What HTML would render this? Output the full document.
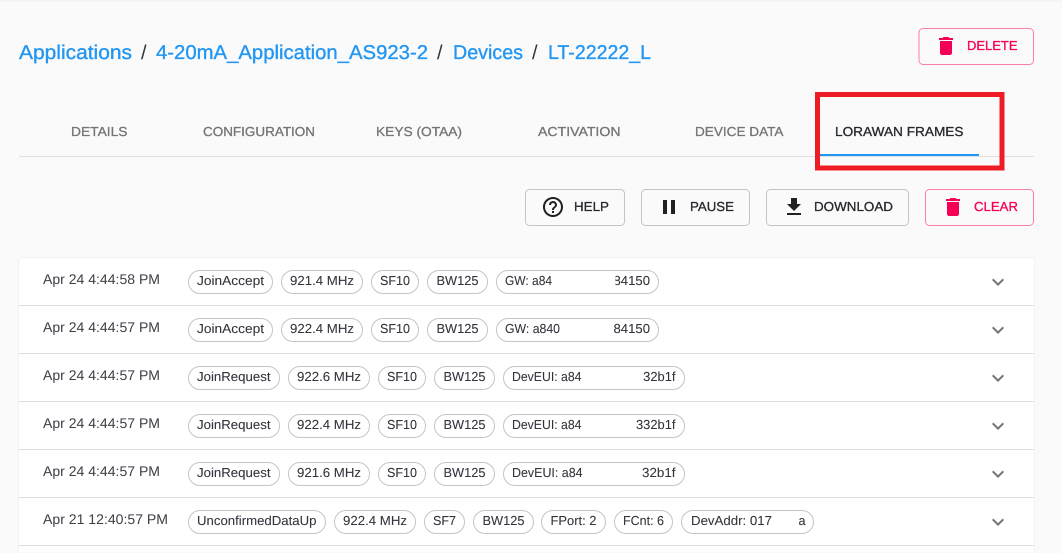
<!DOCTYPE html>
<html><head><meta charset="utf-8"><title>LoRaWAN Frames</title>
<style>
html,body{margin:0;padding:0;background:#fafafa;width:1062px;height:553px;overflow:hidden}
svg{display:block;position:absolute;left:0;top:0}
text{font-family:"Liberation Sans",sans-serif;text-rendering:geometricPrecision}
.bc{font-size:20px;fill:#2196f3;stroke:#2196f3;stroke-width:.35}
.sl{font-size:20px;fill:#333}
.tab{font-size:13px;fill:#757575;stroke:#757575;stroke-width:.3}
.btn{font-size:13px;fill:#26282e;stroke:#26282e;stroke-width:.3}
.red{font-size:13px;fill:#f50057;stroke:#f50057;stroke-width:.3}
.d{font-size:14px;fill:#3c3e46}
.c{font-size:13px;fill:#33343d;stroke:#33343d;stroke-width:.08}
.chip{fill:none;stroke:#c4c4c4;stroke-width:1}
.sep{fill:#e0e0e0}
</style></head>
<body>
<svg width="1062" height="553" viewBox="0 0 1062 553" xmlns="http://www.w3.org/2000/svg">
<rect x="0" y="0" width="1062" height="2" fill="#f5f5f5"/>
<text class="bc" x="19" y="59" textLength="113" lengthAdjust="spacingAndGlyphs">Applications</text>
<text class="sl" x="141" y="59">/</text>
<text class="bc" x="156" y="59" textLength="272" lengthAdjust="spacingAndGlyphs">4-20mA_Application_AS923-2</text>
<text class="sl" x="437" y="59">/</text>
<text class="bc" x="453" y="59" textLength="70" lengthAdjust="spacingAndGlyphs">Devices</text>
<text class="sl" x="532" y="59">/</text>
<text class="bc" x="548" y="59" textLength="103" lengthAdjust="spacingAndGlyphs">LT-22222_L</text>

<rect x="919" y="28.500" width="114.500" height="36" rx="4" fill="none" stroke="#fa80ab"/>
<path transform="translate(934,34)" fill="#f50057" d="M6 19c0 1.100.9 2 2 2h8c1.100 0 2-.9 2-2V7H6v12zM19 4h-3.500l-1-1h-5l-1 1H5v2h14V4z"/>
<text class="red" x="967" y="50" textLength="50.500" lengthAdjust="spacingAndGlyphs">DELETE</text>

<text class="tab" x="71" y="136" textLength="56.500" lengthAdjust="spacingAndGlyphs">DETAILS</text>
<text class="tab" x="203" y="136" textLength="112" lengthAdjust="spacingAndGlyphs">CONFIGURATION</text>
<text class="tab" x="376" y="136" textLength="86" lengthAdjust="spacingAndGlyphs">KEYS (OTAA)</text>
<text class="tab" x="538" y="136" textLength="82.500" lengthAdjust="spacingAndGlyphs">ACTIVATION</text>
<text class="tab" x="695" y="136" textLength="88.500" lengthAdjust="spacingAndGlyphs">DEVICE DATA</text>
<text class="btn" x="835" y="136" textLength="128.500" lengthAdjust="spacingAndGlyphs">LORAWAN FRAMES</text>
<rect x="19" y="156" width="1015" height="1" fill="#e0e0e0"/>
<rect x="820" y="154" width="159" height="2" fill="#2196f3"/>
<rect x="817.500" y="94.500" width="184.500" height="73.500" fill="none" stroke="#ee1c25" stroke-width="5"/>

<rect x="525.500" y="189.500" width="99" height="36" rx="4" fill="none" stroke="#c4c4c4"/>
<path transform="translate(541,195)" fill="#212121" d="M11 18h2v-2h-2v2zm1-16C6.480 2 2 6.480 2 12s4.480 10 10 10 10-4.480 10-10S17.520 2 12 2zm0 18c-4.410 0-8-3.590-8-8s3.590-8 8-8 8 3.590 8 8-3.590 8-8 8zm0-14c-2.210 0-4 1.790-4 4h2c0-1.100.9-2 2-2s2 .9 2 2c0 2-3 1.750-3 5h2c0-2.250 3-2.500 3-5 0-2.210-1.790-4-4-4z"/>
<text class="btn" x="574" y="211" textLength="35" lengthAdjust="spacingAndGlyphs">HELP</text>

<rect x="641.500" y="189.500" width="108" height="36" rx="4" fill="none" stroke="#c4c4c4"/>
<path transform="translate(657,195)" fill="#212121" d="M6 19h4V5H6v14zm8-14v14h4V5h-4z"/>
<text class="btn" x="690" y="211" textLength="44" lengthAdjust="spacingAndGlyphs">PAUSE</text>

<rect x="766.500" y="189.500" width="142" height="36" rx="4" fill="none" stroke="#c4c4c4"/>
<path transform="translate(782,195)" fill="#212121" d="M19 9h-4V3H9v6H5l7 7 7-7zM5 18v2h14v-2H5z"/>
<text class="btn" x="814" y="211" textLength="79" lengthAdjust="spacingAndGlyphs">DOWNLOAD</text>

<rect x="925.500" y="189.500" width="108" height="36" rx="4" fill="none" stroke="#fa80ab"/>
<path transform="translate(941,195)" fill="#f50057" d="M6 19c0 1.100.9 2 2 2h8c1.100 0 2-.9 2-2V7H6v12zM19 4h-3.500l-1-1h-5l-1 1H5v2h14V4z"/>
<text class="red" x="974" y="211" textLength="44" lengthAdjust="spacingAndGlyphs">CLEAR</text>

<path d="M23 257.500H1034.500V553H18.500V262a4.500 4.500 0 0 1 4.500-4.500z" fill="#fff" stroke="#f2f2f2"/>
<rect class="sep" x="19" y="305" width="1015" height="1"/>
<rect class="sep" x="19" y="353" width="1015" height="1"/>
<rect class="sep" x="19" y="401" width="1015" height="1"/>
<rect class="sep" x="19" y="449" width="1015" height="1"/>
<rect class="sep" x="19" y="497" width="1015" height="1"/>
<rect class="sep" x="19" y="545" width="1015" height="1"/>

<g fill="#757575">
<path transform="translate(986,270)" d="M16.590 8.590L12 13.170 7.410 8.590 6 10l6 6 6-6z"/>
<path transform="translate(986,318)" d="M16.590 8.590L12 13.170 7.410 8.590 6 10l6 6 6-6z"/>
<path transform="translate(986,366)" d="M16.590 8.590L12 13.170 7.410 8.590 6 10l6 6 6-6z"/>
<path transform="translate(986,414)" d="M16.590 8.590L12 13.170 7.410 8.590 6 10l6 6 6-6z"/>
<path transform="translate(986,462)" d="M16.590 8.590L12 13.170 7.410 8.590 6 10l6 6 6-6z"/>
<path transform="translate(986,510)" d="M16.590 8.590L12 13.170 7.410 8.590 6 10l6 6 6-6z"/>
</g>

<!-- row 1 -->
<g>
<text class="d" x="43" y="284" textLength="117" lengthAdjust="spacingAndGlyphs">Apr 24 4:44:58 PM</text>
<rect class="chip" x="188.500" y="270.500" width="84" height="23" rx="11.500"/>
<text class="c" x="197" y="285" textLength="67" lengthAdjust="spacingAndGlyphs">JoinAccept</text>
<rect class="chip" x="281.500" y="270.500" width="81" height="23" rx="11.500"/>
<text class="c" x="290" y="285" textLength="64" lengthAdjust="spacingAndGlyphs">921.4 MHz</text>
<rect class="chip" x="371.500" y="270.500" width="47" height="23" rx="11.500"/>
<text class="c" x="380" y="285" textLength="30" lengthAdjust="spacingAndGlyphs">SF10</text>
<rect class="chip" x="427.500" y="270.500" width="60" height="23" rx="11.500"/>
<text class="c" x="436.500" y="285" textLength="42" lengthAdjust="spacingAndGlyphs">BW125</text>
<rect class="chip" x="496.500" y="270.500" width="162" height="23" rx="11.500"/>
<text class="c" x="505" y="285" textLength="47" lengthAdjust="spacingAndGlyphs">GW: a84</text>
<text class="c" x="613.500" y="285" textLength="36.500" lengthAdjust="spacingAndGlyphs">84150</text>
<rect x="600" y="273" width="15.500" height="18" fill="#fff"/>
</g>
<!-- row 2 -->
<g>
<text class="d" x="43" y="332" textLength="117" lengthAdjust="spacingAndGlyphs">Apr 24 4:44:57 PM</text>
<rect class="chip" x="188.500" y="318.500" width="84" height="23" rx="11.500"/>
<text class="c" x="197" y="333" textLength="67" lengthAdjust="spacingAndGlyphs">JoinAccept</text>
<rect class="chip" x="281.500" y="318.500" width="81" height="23" rx="11.500"/>
<text class="c" x="290" y="333" textLength="64" lengthAdjust="spacingAndGlyphs">922.4 MHz</text>
<rect class="chip" x="371.500" y="318.500" width="47" height="23" rx="11.500"/>
<text class="c" x="380" y="333" textLength="30" lengthAdjust="spacingAndGlyphs">SF10</text>
<rect class="chip" x="427.500" y="318.500" width="60" height="23" rx="11.500"/>
<text class="c" x="436.500" y="333" textLength="42" lengthAdjust="spacingAndGlyphs">BW125</text>
<rect class="chip" x="496.500" y="318.500" width="162" height="23" rx="11.500"/>
<text class="c" x="505" y="333" textLength="55" lengthAdjust="spacingAndGlyphs">GW: a840</text>
<text class="c" x="613.500" y="333" textLength="36.500" lengthAdjust="spacingAndGlyphs">84150</text>
</g>
<!-- row 3 -->
<g>
<text class="d" x="43" y="380" textLength="117" lengthAdjust="spacingAndGlyphs">Apr 24 4:44:57 PM</text>
<rect class="chip" x="188.500" y="366.500" width="91" height="23" rx="11.500"/>
<text class="c" x="197" y="381" textLength="73.500" lengthAdjust="spacingAndGlyphs">JoinRequest</text>
<rect class="chip" x="288.500" y="366.500" width="81" height="23" rx="11.500"/>
<text class="c" x="297" y="381" textLength="64" lengthAdjust="spacingAndGlyphs">922.6 MHz</text>
<rect class="chip" x="378.500" y="366.500" width="47" height="23" rx="11.500"/>
<text class="c" x="387" y="381" textLength="30" lengthAdjust="spacingAndGlyphs">SF10</text>
<rect class="chip" x="434.500" y="366.500" width="60" height="23" rx="11.500"/>
<text class="c" x="443.500" y="381" textLength="42" lengthAdjust="spacingAndGlyphs">BW125</text>
<rect class="chip" x="503.500" y="366.500" width="181" height="23" rx="11.500"/>
<text class="c" x="512" y="381" textLength="69.500" lengthAdjust="spacingAndGlyphs">DevEUI: a84</text>
<text class="c" x="636" y="381" textLength="39.500" lengthAdjust="spacingAndGlyphs">332b1f</text>
<rect x="625" y="369" width="18" height="18" fill="#fff"/>
</g>
<!-- row 4 -->
<g>
<text class="d" x="43" y="428" textLength="117" lengthAdjust="spacingAndGlyphs">Apr 24 4:44:57 PM</text>
<rect class="chip" x="188.500" y="414.500" width="91" height="23" rx="11.500"/>
<text class="c" x="197" y="429" textLength="73.500" lengthAdjust="spacingAndGlyphs">JoinRequest</text>
<rect class="chip" x="288.500" y="414.500" width="81" height="23" rx="11.500"/>
<text class="c" x="297" y="429" textLength="64" lengthAdjust="spacingAndGlyphs">922.4 MHz</text>
<rect class="chip" x="378.500" y="414.500" width="47" height="23" rx="11.500"/>
<text class="c" x="387" y="429" textLength="30" lengthAdjust="spacingAndGlyphs">SF10</text>
<rect class="chip" x="434.500" y="414.500" width="60" height="23" rx="11.500"/>
<text class="c" x="443.500" y="429" textLength="42" lengthAdjust="spacingAndGlyphs">BW125</text>
<rect class="chip" x="503.500" y="414.500" width="181" height="23" rx="11.500"/>
<text class="c" x="512" y="429" textLength="69.500" lengthAdjust="spacingAndGlyphs">DevEUI: a84</text>
<text class="c" x="636" y="429" textLength="39.500" lengthAdjust="spacingAndGlyphs">332b1f</text>
</g>
<!-- row 5 -->
<g>
<text class="d" x="43" y="476" textLength="117" lengthAdjust="spacingAndGlyphs">Apr 24 4:44:57 PM</text>
<rect class="chip" x="188.500" y="462.500" width="91" height="23" rx="11.500"/>
<text class="c" x="197" y="477" textLength="73.500" lengthAdjust="spacingAndGlyphs">JoinRequest</text>
<rect class="chip" x="288.500" y="462.500" width="81" height="23" rx="11.500"/>
<text class="c" x="297" y="477" textLength="64" lengthAdjust="spacingAndGlyphs">921.6 MHz</text>
<rect class="chip" x="378.500" y="462.500" width="47" height="23" rx="11.500"/>
<text class="c" x="387" y="477" textLength="30" lengthAdjust="spacingAndGlyphs">SF10</text>
<rect class="chip" x="434.500" y="462.500" width="60" height="23" rx="11.500"/>
<text class="c" x="443.500" y="477" textLength="42" lengthAdjust="spacingAndGlyphs">BW125</text>
<rect class="chip" x="503.500" y="462.500" width="181" height="23" rx="11.500"/>
<text class="c" x="512" y="477" textLength="77.500" lengthAdjust="spacingAndGlyphs">DevEUI: a840</text>
<rect x="583" y="465" width="8" height="18" fill="#fff"/>
<text class="c" x="642" y="477" textLength="33.500" lengthAdjust="spacingAndGlyphs">32b1f</text>
</g>
<!-- row 6 -->
<g>
<text class="d" x="43" y="524" textLength="125" lengthAdjust="spacingAndGlyphs">Apr 21 12:40:57 PM</text>
<rect class="chip" x="188.500" y="510.500" width="137" height="23" rx="11.500"/>
<text class="c" x="197" y="525" textLength="119.500" lengthAdjust="spacingAndGlyphs">UnconfirmedDataUp</text>
<rect class="chip" x="334.500" y="510.500" width="81" height="23" rx="11.500"/>
<text class="c" x="343" y="525" textLength="64" lengthAdjust="spacingAndGlyphs">922.4 MHz</text>
<rect class="chip" x="424.500" y="510.500" width="40" height="23" rx="11.500"/>
<text class="c" x="433" y="525" textLength="23" lengthAdjust="spacingAndGlyphs">SF7</text>
<rect class="chip" x="473.500" y="510.500" width="60" height="23" rx="11.500"/>
<text class="c" x="482.500" y="525" textLength="42" lengthAdjust="spacingAndGlyphs">BW125</text>
<rect class="chip" x="541.500" y="510.500" width="64" height="23" rx="11.500"/>
<text class="c" x="550.500" y="525" textLength="46" lengthAdjust="spacingAndGlyphs">FPort: 2</text>
<rect class="chip" x="614.500" y="510.500" width="58" height="23" rx="11.500"/>
<text class="c" x="623" y="525" textLength="41" lengthAdjust="spacingAndGlyphs">FCnt: 6</text>
<rect class="chip" x="681.500" y="510.500" width="132" height="23" rx="11.500"/>
<text class="c" x="691" y="525" textLength="81" lengthAdjust="spacingAndGlyphs">DevAddr: 017</text>
<text class="c" x="798.500" y="525" textLength="7" lengthAdjust="spacingAndGlyphs">a</text>
</g>
</svg>
</body></html>
